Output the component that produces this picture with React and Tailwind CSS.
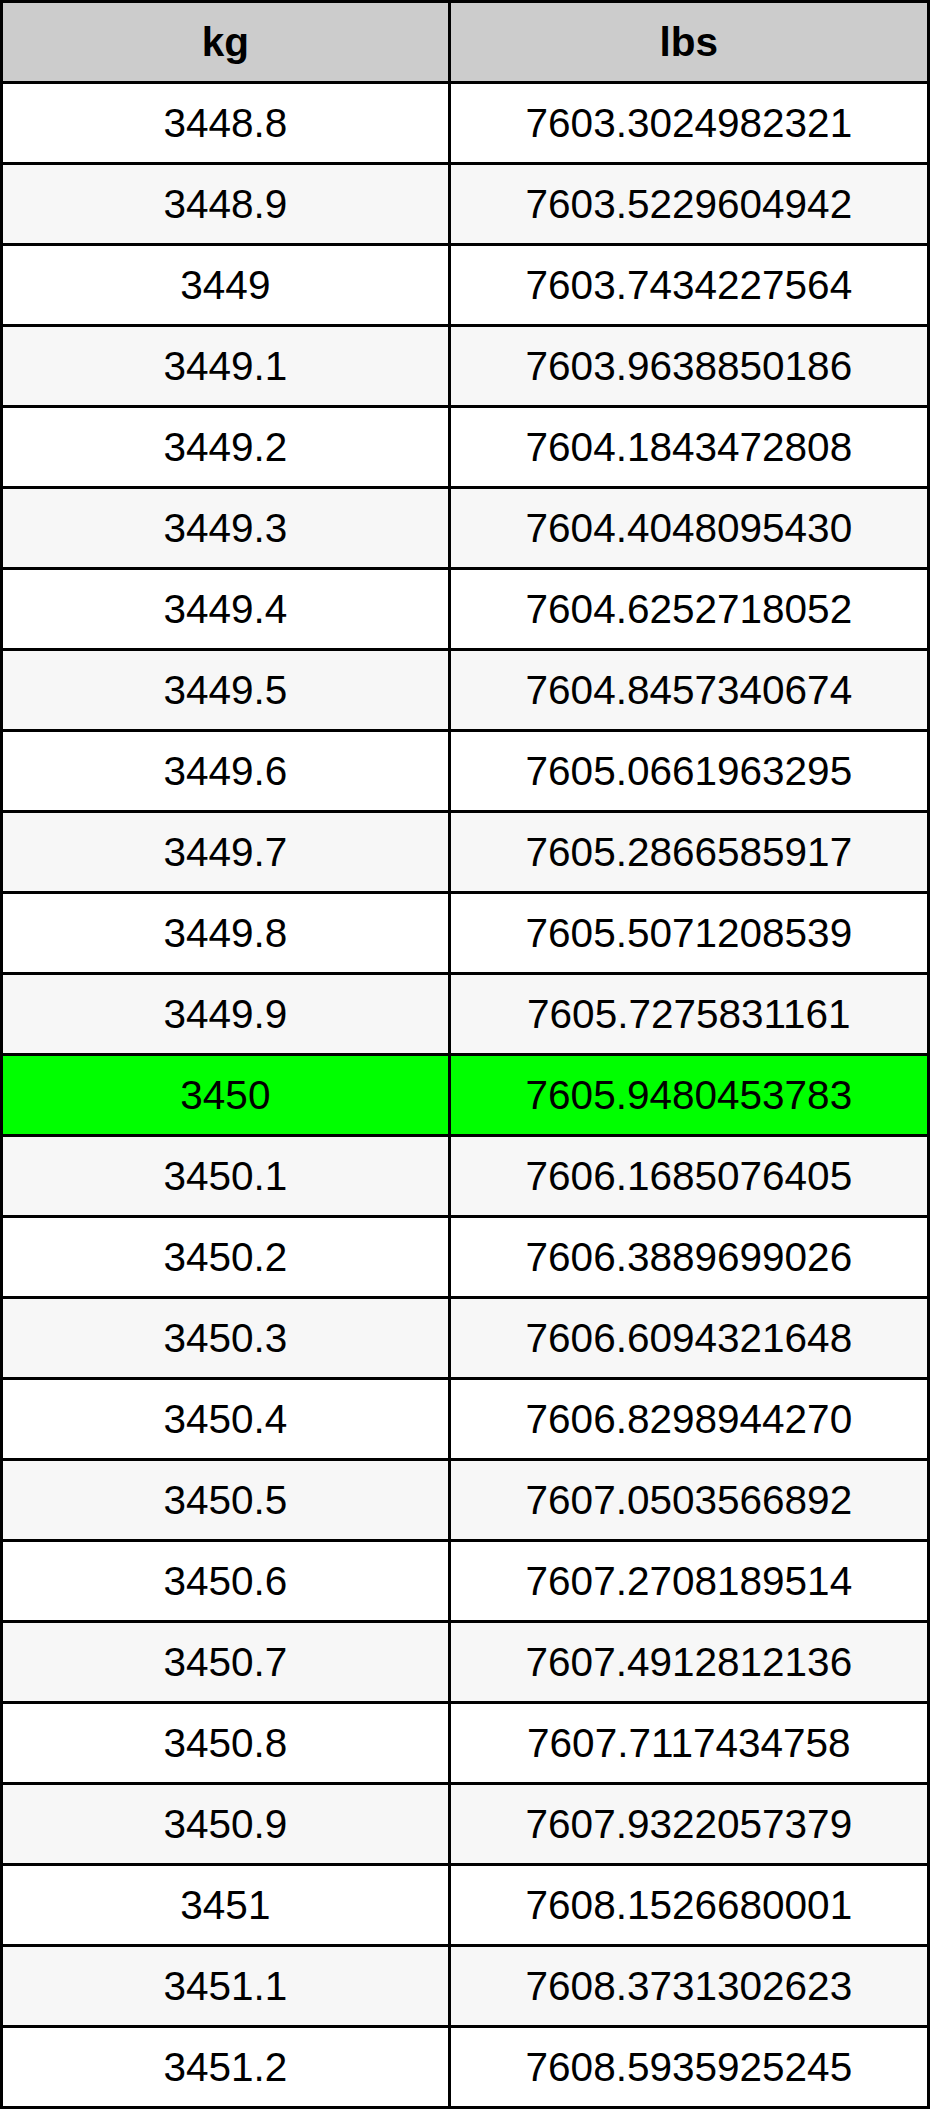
const rows = [
  ['3448.8', '7603.3024982321'],
  ['3448.9', '7603.5229604942'],
  ['3449', '7603.7434227564'],
  ['3449.1', '7603.9638850186'],
  ['3449.2', '7604.1843472808'],
  ['3449.3', '7604.4048095430'],
  ['3449.4', '7604.6252718052'],
  ['3449.5', '7604.8457340674'],
  ['3449.6', '7605.0661963295'],
  ['3449.7', '7605.2866585917'],
  ['3449.8', '7605.5071208539'],
  ['3449.9', '7605.7275831161'],
  ['3450', '7605.9480453783'],
  ['3450.1', '7606.1685076405'],
  ['3450.2', '7606.3889699026'],
  ['3450.3', '7606.6094321648'],
  ['3450.4', '7606.8298944270'],
  ['3450.5', '7607.0503566892'],
  ['3450.6', '7607.2708189514'],
  ['3450.7', '7607.4912812136'],
  ['3450.8', '7607.7117434758'],
  ['3450.9', '7607.9322057379'],
  ['3451', '7608.1526680001'],
  ['3451.1', '7608.3731302623'],
  ['3451.2', '7608.5935925245'],
];

export default function App() {
  return (
    <div className="bg-white" style={{ fontFamily: '"Liberation Sans", Arial, sans-serif' }}>
      <table className="w-full border-collapse border-[3px] border-black text-black text-[40.5px] text-center">
        <thead>
          <tr className="h-[81px] bg-[#cccccc]">
            <th className="w-[48.3%] border-[3px] border-black font-bold">kg</th>
            <th className="border-[3px] border-black font-bold">lbs</th>
          </tr>
        </thead>
        <tbody>
          {rows.map((r, i) => {
            const bg = r[0] === '3450' ? 'bg-[#00ff00]' : i % 2 === 0 ? 'bg-white' : 'bg-[#f7f7f7]';
            return (
              <tr key={r[0]} className={`h-[81px] ${bg}`}>
                <td className="border-[3px] border-black">{r[0]}</td>
                <td className="border-[3px] border-black">{r[1]}</td>
              </tr>
            );
          })}
        </tbody>
      </table>
    </div>
  );
}
